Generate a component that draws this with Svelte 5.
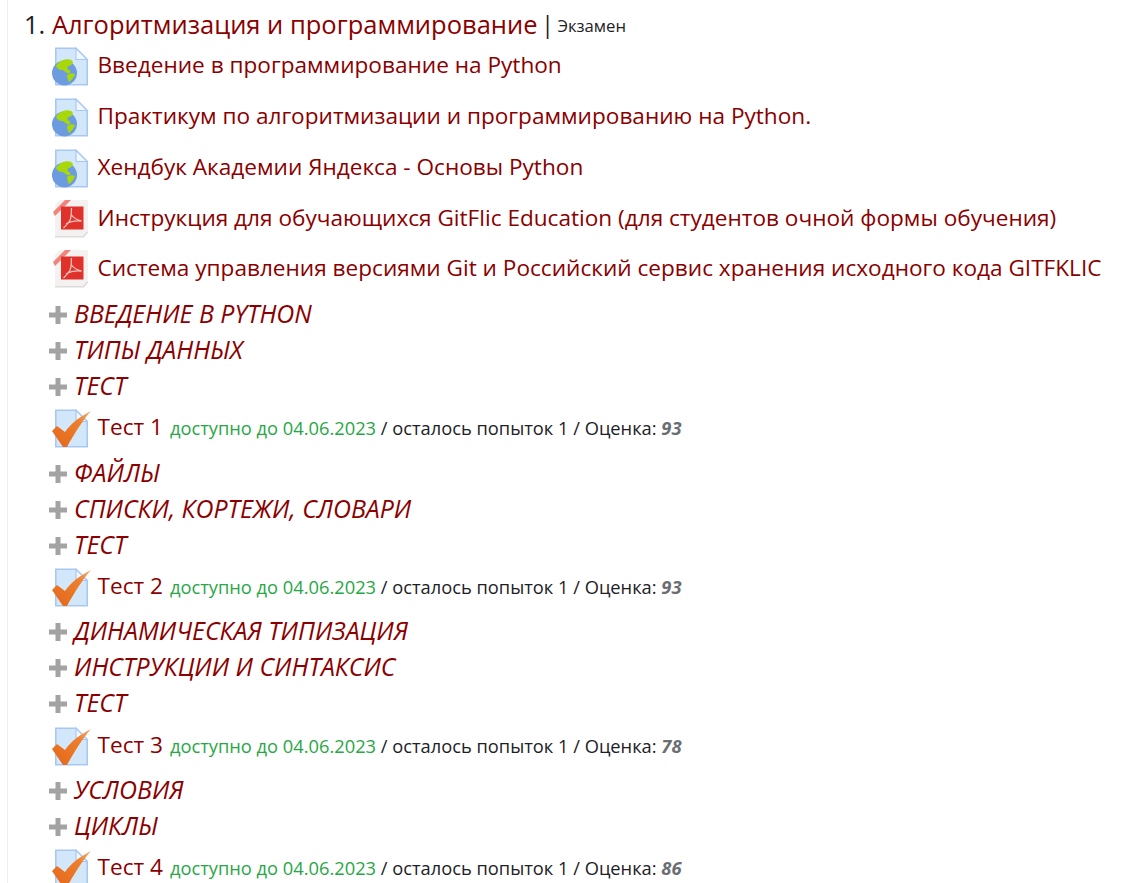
<script lang="ts">
	const rows = [
		{ kind: 'web', text: 'Введение в программирование на Python' },
		{ kind: 'web', text: 'Практикум по алгоритмизации и программированию на Python.' },
		{ kind: 'web', text: 'Хендбук Академии Яндекса - Основы Python' },
		{ kind: 'pdf', text: 'Инструкция для обучающихся GitFlic Education (для студентов очной формы обучения)' },
		{ kind: 'pdf', text: 'Система управления версиями Git и Российский сервис хранения исходного кода GITFKLIC' },
		{ kind: 'sec', text: 'ВВЕДЕНИЕ В PYTHON' },
		{ kind: 'sec', text: 'ТИПЫ ДАННЫХ' },
		{ kind: 'sec', text: 'ТЕСТ' },
		{ kind: 'quiz', text: 'Тест 1', score: 93 },
		{ kind: 'sec', text: 'ФАЙЛЫ' },
		{ kind: 'sec', text: 'СПИСКИ, КОРТЕЖИ, СЛОВАРИ' },
		{ kind: 'sec', text: 'ТЕСТ' },
		{ kind: 'quiz', text: 'Тест 2', score: 93 },
		{ kind: 'sec', text: 'ДИНАМИЧЕСКАЯ ТИПИЗАЦИЯ' },
		{ kind: 'sec', text: 'ИНСТРУКЦИИ И СИНТАКСИС' },
		{ kind: 'sec', text: 'ТЕСТ' },
		{ kind: 'quiz', text: 'Тест 3', score: 78 },
		{ kind: 'sec', text: 'УСЛОВИЯ' },
		{ kind: 'sec', text: 'ЦИКЛЫ' },
		{ kind: 'quiz', text: 'Тест 4', score: 86 }
	];
</script>

{#snippet sheet()}
	<path d="M4.800 2.300h20.200l11.200 11.200v25.200H4.800z" fill="#d3e7fb" stroke="#a8c8f3" stroke-width="1.600" />
	<path d="M25 2.300v11.200h11.200z" fill="#f0f7fe" stroke="#a8c8f3" stroke-width="1.200" />
{/snippet}

{#snippet webIcon()}
	<svg class="icon" viewBox="0 0 40 40" width="40" height="40">
		{@render sheet()}
		<circle cx="13.500" cy="27" r="12.500" fill="#6c9be0" />
		<path d="M5 20c3-5 10-8 15-6 4 2 1 5-2 6-2 0-2 3 0 4 3 1 1 4-2 3-2-1-3-3-5-3-3 0-5-2-6-4z" fill="#a8d80a" />
		<path d="M17 28c3-1 5-1 7 0-1 3-4 7-6 8-1-2-3-6-1-8z" fill="#a8d80a" />
	</svg>
{/snippet}

{#snippet pdfIcon()}
	<svg class="icon" viewBox="0 0 40 40" width="40" height="40">
		<path d="M4 38.500h29l4-5v-1H4z" fill="#dddcdb" />
		<path d="M4 6l5-5h28v30l-5 6H4z" fill="#f3f2f1" />
		<path d="M2 13 14 1h6L4 17z" fill="#f0837c" />
		<rect x="10" y="7.500" width="22.500" height="23" fill="#e0312b" />
		<path d="M20.500 9c-.5 5 .5 9-2 13-1.500 2.500-4 5-6 7M20.500 16c2 3 6 5 10 6M15 25c4-2.500 10-3.500 15.500-3" fill="none" stroke="#f7c3be" stroke-width="1.300" />
	</svg>
{/snippet}

{#snippet quizIcon()}
	<svg class="icon" viewBox="0 0 40 40" width="40" height="40">
		{@render sheet()}
		<defs>
			<linearGradient id="tick" x1="0" y1="1" x2="1" y2="0">
				<stop offset="0" stop-color="#e3661a" />
				<stop offset="0.7" stop-color="#ee7f2c" />
				<stop offset="1" stop-color="#f4b07c" />
			</linearGradient>
		</defs>
		<path d="M1 23l5-5 8 6C20 15 30 8 40 3 32 12 23 26 16 39h-4z" fill="url(#tick)" />
	</svg>
{/snippet}

<main class="course">
	<h3 class="title">
		<span>1.</span>
		<a>Алгоритмизация и программирование</a>
		<span class="sep">|</span>
		<span class="exam">Экзамен</span>
	</h3>
	<ul class="list">
		{#each rows as row}
			{#if row.kind === 'sec'}
				<li class="section">
					<svg class="plus" viewBox="0 0 20 20" width="20" height="20">
						<path d="M7.500 1h5v6.500h6.500v5h-6.500v6.500h-5v-6.500H1v-5h6.500z" fill="#a3a3a3" />
					</svg>
					<a>{row.text}</a>
				</li>
			{:else}
				<li class="item {row.kind}">
					{#if row.kind === 'web'}
						{@render webIcon()}
					{:else if row.kind === 'pdf'}
						{@render pdfIcon()}
					{:else}
						{@render quizIcon()}
					{/if}
					<a>{row.text}</a>
					{#if row.kind === 'quiz'}
						<span class="meta">
							<span class="until">доступно до 04.06.2023</span> / осталось попыток 1 / Оценка: <b>{row.score}</b>
						</span>
					{/if}
				</li>
			{/if}
		{/each}
	</ul>
</main>

<style>
	:global(body) {
		margin: 0;
		background: #fff;
		overflow: hidden;
	}

	.course {
		height: 883px;
		overflow: hidden;
		box-sizing: border-box;
		margin-left: 7px;
		border-left: 1px solid #eceef0;
		padding: 7px 0 0 16px;
		font-family: "Open Sans", "Noto Sans", sans-serif;
		color: #1d2125;
	}

	a {
		color: #8b0000;
		text-decoration: none;
	}

	.title {
		margin: 0;
		height: 34px;
		font-size: 25.500px;
		font-weight: 400;
		line-height: 34px;
		white-space: nowrap;
	}

	.sep {
		margin-left: -3px;
		font-size: 23px;
		vertical-align: 1px;
	}

	.exam {
		margin-left: -3px;
		font-size: 16.700px;
		vertical-align: 2.500px;
	}

	.list {
		list-style: none;
		margin: 0;
		padding: 0;
	}

	.item {
		display: flex;
		align-items: center;
		box-sizing: border-box;
		height: 50.750px;
		padding: 0 0 3px 27px;
		font-size: 22.600px;
		white-space: nowrap;
	}

	.item .icon {
		flex: none;
		margin: 3px 6.500px 0 0;
	}

	.section {
		display: flex;
		align-items: center;
		height: 36px;
		padding-left: 24px;
		font-size: 24.900px;
		font-style: italic;
		white-space: nowrap;
	}

	.plus {
		flex: none;
		margin: 4px 6px 0 0;
	}

	.meta {
		font-size: 18.300px;
		margin-left: 7px;
		padding-top: 2px;
	}

	.until {
		color: #28a745;
	}

	.meta b {
		color: #6a6e73;
		font-style: italic;
	}
</style>
